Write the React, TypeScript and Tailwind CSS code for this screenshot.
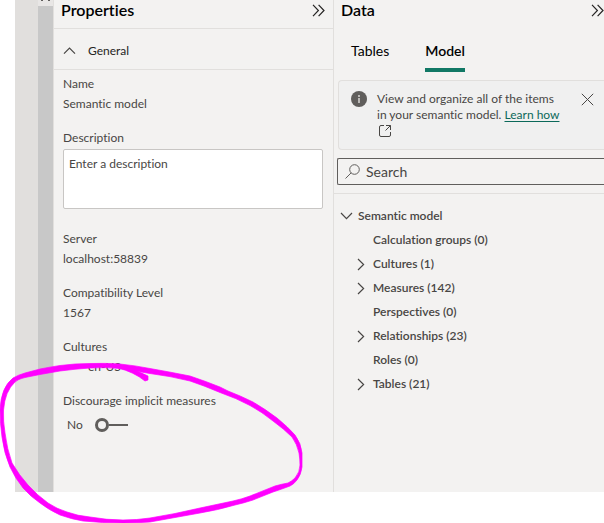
import React from 'react';

interface TreeNode {
  label: string;
  count: number;
  expandable: boolean;
}

const NODES: TreeNode[] = [
  { label: 'Calculation groups', count: 0, expandable: false },
  { label: 'Cultures', count: 1, expandable: true },
  { label: 'Measures', count: 142, expandable: true },
  { label: 'Perspectives', count: 0, expandable: false },
  { label: 'Relationships', count: 23, expandable: true },
  { label: 'Roles', count: 0, expandable: false },
  { label: 'Tables', count: 21, expandable: true },
];

function DoubleChevron() {
  return (
    <svg width="13" height="13" viewBox="0 0 13 13" fill="none" stroke="#252423" strokeWidth="1.2">
      <path d="M1 0.8 6.4 6.5 1 12.2M6.6 0.8 12 6.5 6.6 12.2" />
    </svg>
  );
}

function Chevron({ direction }: { direction: 'up' | 'down' | 'right' }) {
  if (direction === 'right') {
    return (
      <svg width="8" height="13" viewBox="0 0 8 13" fill="none" stroke="#484644" strokeWidth="1.2">
        <path d="M1 1 6.6 6.5 1 12" />
      </svg>
    );
  }
  return (
    <svg width="13" height="8" viewBox="0 0 13 8" fill="none" stroke="#484644" strokeWidth="1.2">
      <path d={direction === 'up' ? 'M1 6.6 6.5 1 12 6.6' : 'M1 1 6.5 6.6 12 1'} />
    </svg>
  );
}

function Field({ label, value, indent }: { label: string; value: string; indent?: boolean }) {
  return (
    <div>
      <dt>{label}</dt>
      <dd className={indent ? 'pl-[25px]' : ''}>{value}</dd>
    </div>
  );
}

function PropertiesPane() {
  return (
    <section className="w-[281px] shrink-0 border-x border-[#e1dfdd] bg-[#f3f2f1] pb-[57px] text-[12px] leading-5 text-[#484644]">
      <header className="flex h-[29px] items-start justify-between border-b border-[#e1dfdd] pr-2 pl-[7px]">
        <h2 className="text-[16px] leading-5 font-semibold text-black">Properties</h2>
        <button type="button" aria-label="Collapse properties" className="pt-1">
          <DoubleChevron />
        </button>
      </header>
      <button
        type="button"
        className="flex h-[41px] w-full items-center gap-3 border-b border-[#e1dfdd] pt-[3px] pl-[9px] text-[#252423]"
      >
        <Chevron direction="up" />
        <span>General</span>
      </button>
      <div className="flex flex-col gap-[14px] pt-1 pr-[10px] pl-[9px]">
        <dl>
          <Field label="Name" value="Semantic model" />
        </dl>
        <div className="mb-[6px]">
          <label htmlFor="description" className="block pb-px">
            Description
          </label>
          <textarea
            id="description"
            placeholder="Enter a description"
            className="block h-[60px] w-full resize-none rounded-xs border border-[#c8c6c4] bg-white px-[5px] py-1 placeholder:text-[#484644]"
          />
        </div>
        <dl className="flex flex-col gap-[14px]">
          <Field label="Server" value="localhost:58839" />
          <Field label="Compatibility Level" value="1567" />
          <Field label="Cultures" value="en-US" indent />
        </dl>
        <div>
          <label htmlFor="discourage" className="block">
            Discourage implicit measures
          </label>
          <div className="flex items-center gap-3 pt-1 pl-1">
            <span>No</span>
            <input
              id="discourage"
              type="checkbox"
              role="switch"
              className="flex h-[14px] w-[33px] appearance-none items-center before:size-[14px] before:rounded-full before:border-3 before:border-[#605e5c] after:h-[2px] after:flex-1 after:bg-[#605e5c]"
            />
          </div>
        </div>
      </div>
    </section>
  );
}

function InfoBanner() {
  return (
    <div className="ml-1 flex h-[70px] items-start rounded-l border border-r-0 border-[#e1dfdd] bg-[#f0f0f0] pt-[10px] pr-[10px] pl-3 text-[12px] leading-4 text-[#484644]">
      <svg width="16" height="16" viewBox="0 0 16 16" className="shrink-0">
        <circle cx="8" cy="8" r="8" fill="#605e5c" />
        <path d="M8 4v2M8 7v5" stroke="#d2d0ce" strokeWidth="1.6" />
      </svg>
      <p className="ml-[10px] flex-1 whitespace-nowrap">
        View and organize all of the items
        <br />
        in your semantic model.{' '}
        <a href="#learn" className="text-[#0c695a] underline underline-offset-2">
          Learn how
        </a>
        <svg width="14" height="14" viewBox="0 0 14 14" fill="none" stroke="#484644" className="mt-[1px] ml-px">
          <path d="M6 1.5H3A1.5 1.5 0 0 0 1.5 3v8A1.5 1.5 0 0 0 3 12.5h8a1.5 1.5 0 0 0 1.5-1.5V8M8 1.5h4.5V6M12.5 1.5 7.5 6.5" />
        </svg>
      </p>
      <button type="button" aria-label="Dismiss" className="pt-[2px]">
        <svg width="13" height="13" viewBox="0 0 13 13" fill="none" stroke="#484644">
          <path d="M0.8 0.8 12.2 12.2M12.2 0.8 0.8 12.2" />
        </svg>
      </button>
    </div>
  );
}

function DataPane() {
  return (
    <section className="min-w-0 flex-1 overflow-hidden bg-[#f3f2f1]">
      <header className="flex h-[29px] items-start justify-between pl-[7px]">
        <h2 className="text-[16px] leading-5 font-semibold text-black">Data</h2>
        <button type="button" aria-label="Collapse data" className="pt-1">
          <DoubleChevron />
        </button>
      </header>
      <div role="tablist" className="flex gap-9 pt-2 pl-[17px] text-[14px] leading-6 text-black">
        <button type="button" role="tab" aria-selected="false" className="h-[35px] border-b-4 border-transparent pb-1">
          Tables
        </button>
        <button
          type="button"
          role="tab"
          aria-selected="true"
          className="h-[35px] border-b-4 border-[#117865] pb-1 font-semibold"
        >
          Model
        </button>
      </div>
      <div className="border-b border-[#e1dfdd] pt-2 pb-2">
        <InfoBanner />
        <label className="mt-2 ml-[3px] flex h-[27px] items-center gap-[6px] rounded-l-xs border border-r-0 border-[#605e5c] pl-[7px]">
          <svg width="15" height="15" viewBox="0 0 15 15" fill="none" stroke="#605e5c">
            <circle cx="9.5" cy="5.5" r="4.8" />
            <path d="M6.1 8.9 0.5 14.5" />
          </svg>
          <input
            type="search"
            aria-label="Search"
            placeholder="Search"
            className="min-w-0 flex-1 text-[14px] leading-5 outline-none placeholder:text-[#484644]"
          />
        </label>
      </div>
      <ul role="tree" className="pt-[10px] text-[12px] leading-6 font-semibold text-[#484644]">
        <li role="treeitem" aria-expanded="true">
          <button type="button" className="flex items-center gap-[5px] pl-[6px]">
            <Chevron direction="down" />
            Semantic model
          </button>
          <ul role="group">
            {NODES.map(node => (
              <li key={node.label} role="treeitem" className="flex items-center pl-[23px]">
                <span className="w-4">{node.expandable && <Chevron direction="right" />}</span>
                {node.label} ({node.count})
              </li>
            ))}
          </ul>
        </li>
      </ul>
    </section>
  );
}

// Hand-drawn marker loop around the implicit measures switch
function MarkerLoop() {
  return (
    <svg
      width="304"
      height="163"
      viewBox="0 360 304 163"
      fill="#ff00ff"
      stroke="#ff00ff"
      strokeWidth="0.7"
      className="pointer-events-none absolute top-[360px] left-0"
    >
      <path
        fillRule="evenodd"
        d="M13 378Q18 375 25 373L40 369Q50 367 60 365.5Q75 363.5 90 363.5Q105 363 120 364Q135 365.5 150 368.5Q170 372 190 376Q205 381 220 387L228 391Q241 396 253 402Q265 409 277 418Q288 427 295 435Q301 443 302 453V467Q301 475 297 480Q294 484 290 486Q282 489 273 492L253 500Q244 503 235 505Q218 510 200 513L150 522Q137 523 123 523Q102 523 83 521Q71 519 60 515Q49 510 40 503Q31 497 23 488Q15 478 10 467Q4 453 2 437Q0 423 0 410Q1 387 13 378ZM15 382Q5 391 3.5 410Q3 421 5 433Q7 449 12 463Q19 475 28 485Q37 495 48 503Q57 509 67 512Q78 516 90 517Q107 520 123 520Q137 520 150 518Q175 514 200 508L233 501Q242 499 250 496L275 486Q282 484 288 483Q292 481 295 478Q300 472 300 465Q300 459 299 453Q297 444 292 437Q284 429 273 421Q262 412 250 405.5Q236 398 220 392.5Q205 386 190 381Q170 376 150 373.5L120 368.5Q105 367 90 368Q75 369 60 371L40 374.5L25 377.5Q18 379 15 382Z"
      />
      <path d="M118 366Q135 369 148 376V380L145 381Q134 372 118 368Z" />
    </svg>
  );
}

export default function App() {
  return (
    <main className="relative min-h-screen overflow-hidden bg-white pl-[15px] font-['Lato','Noto_Sans',sans-serif] [font-variant-ligatures:none]">
      <div className="flex">
        <div className="w-[23px] shrink-0 bg-[#e1dfdd]" />
        <div className="w-[15px] shrink-0 bg-[#c8c8c8]">
          <div className="flex h-[6px] items-start justify-center gap-[5px] bg-[#e8e6e5]">
            <span className="h-px w-[2px] bg-[#605e5c]" />
            <span className="h-px w-[2px] bg-[#605e5c]" />
          </div>
        </div>
        <PropertiesPane />
        <DataPane />
      </div>
      <MarkerLoop />
    </main>
  );
}
